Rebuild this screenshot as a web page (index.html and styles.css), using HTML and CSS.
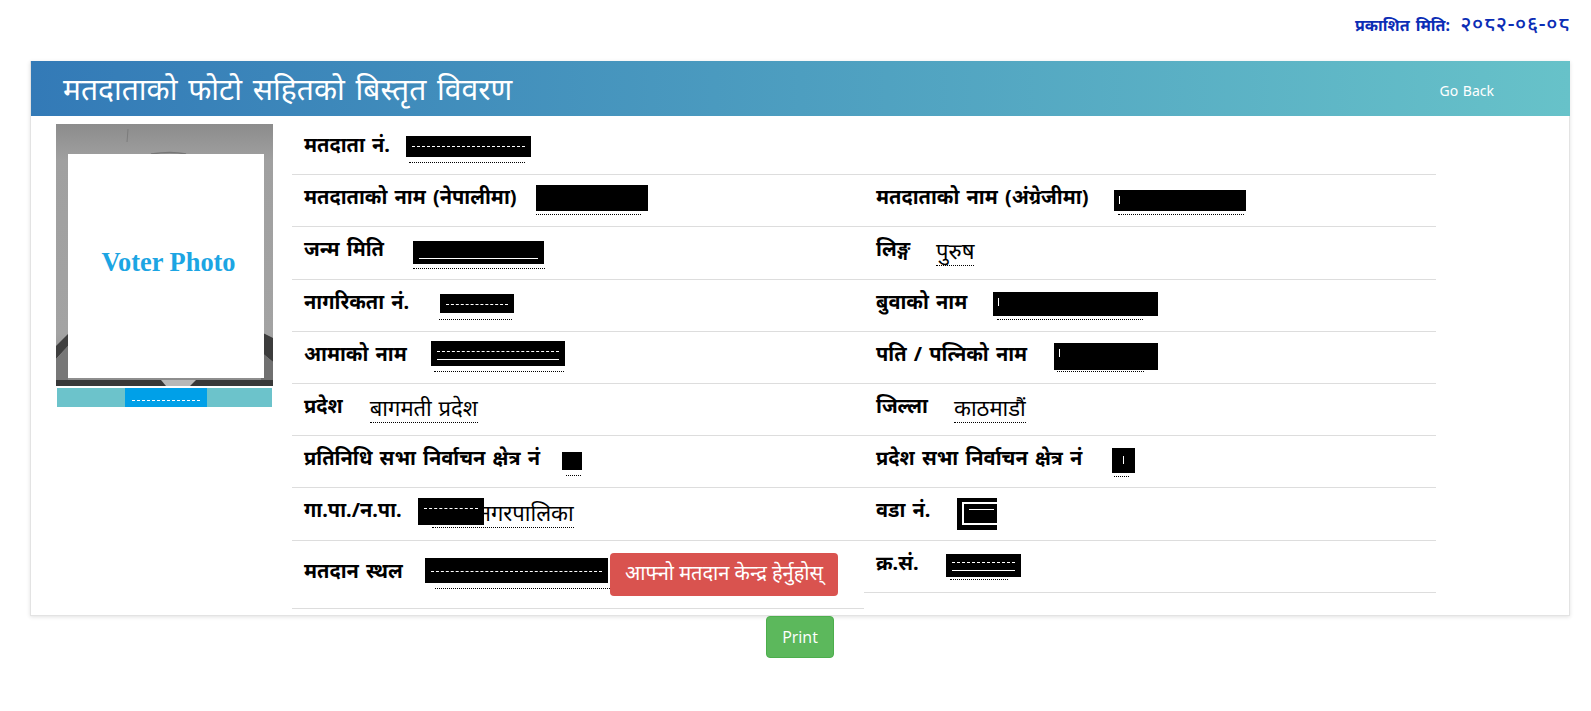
FILE: index.html
```html
<!DOCTYPE html>
<html lang="ne">
<head>
<meta charset="utf-8">
<title>मतदाता विवरण</title>
<link rel="stylesheet" href="styles.css">
</head>
<body>
<p class="published">प्रकाशित मिति: <span class="published-date">२०८२-०६-०८</span></p>
<main class="panel">
  <header class="panel-head">
    <h1 class="panel-title">मतदाताको फोटो सहितको बिस्तृत विवरण</h1>
    <a class="back" href="#">Go Back</a>
  </header>
  <div class="panel-body">
    <aside class="voter">
      <div class="photo">
        <svg class="photo-bg" viewBox="0 0 217 262" aria-hidden="true">
          <defs>
            <linearGradient id="wall" x1="0" y1="0" x2="0" y2="1">
              <stop offset="0" stop-color="#8c8c8c"/>
              <stop offset=".14" stop-color="#a0a0a0"/>
              <stop offset=".8" stop-color="#a3a3a3"/>
              <stop offset="1" stop-color="#8a8a8a"/>
            </linearGradient>
          </defs>
          <rect width="217" height="262" fill="url(#wall)"/>
          <path d="M71 18l1-13" stroke="#7c7c7c" stroke-width="1" fill="none"/>
          <path d="M95 30q20-3 35 0" stroke="#777" stroke-width="1.5" fill="none"/>
          <path d="M0 222L12 210V222L0 235Z" fill="#3f3f3f"/>
          <path d="M0 235L12 222V262H0Z" fill="#777"/>
          <path d="M205 208L217 214V238L205 228Z" fill="#3c3c3c"/>
          <path d="M205 228L217 238V262H205Z" fill="#707070"/>
          <rect y="256" width="217" height="6" fill="#383838"/>
          <path d="M105 256H140L134 262H110Z" fill="#b8b8b8"/>
        </svg>
        <div class="photo-card">Voter Photo</div>
      </div>
      <div class="caption"><span class="caption-tag"><i class="ticks"></i></span></div>
    </aside>
    <section class="details">
      <div class="row"><b class="lab">मतदाता नं.</b><span class="val masked w-voter"><i class="mask m-voter"><i class="ticks"></i></i></span></div>
      <div class="cols">
        <div class="col">
          <div class="row"><b class="lab">मतदाताको नाम (नेपालीमा)</b><span class="val masked w-np"><i class="mask m-np"></i></span></div>
          <div class="row"><b class="lab">जन्म मिति</b><span class="val masked w-dob"><i class="mask m-dob"><i class="ticks low"></i></i></span></div>
          <div class="row"><b class="lab">नागरिकता नं.</b><span class="val masked w-cit"><i class="mask m-cit"><i class="ticks"></i></i></span></div>
          <div class="row"><b class="lab">आमाको नाम</b><span class="val masked w-mom"><i class="mask m-mom"><i class="ticks two"></i></i></span></div>
          <div class="row"><b class="lab">प्रदेश</b><span class="val w-pr">बागमती प्रदेश</span></div>
          <div class="row"><b class="lab">प्रतिनिधि सभा निर्वाचन क्षेत्र नं</b><span class="val masked w-hor"><i class="mask m-hor"></i></span></div>
          <div class="row"><b class="lab">गा.पा./न.पा.</b><span class="val masked w-mun"><i class="mask m-mun"><i class="ticks"></i></i>नगरपालिका</span></div>
          <div class="row row-tall"><b class="lab">मतदान स्थल</b><span class="val masked w-place"><i class="mask m-place"><i class="ticks"></i></i></span><a class="btn" href="#">आफ्नो मतदान केन्द्र हेर्नुहोस्</a></div>
        </div>
        <div class="col">
          <div class="row"><b class="lab">मतदाताको नाम (अंग्रेजीमा)</b><span class="val masked w-en"><i class="mask m-en"><i class="nick"></i></i></span></div>
          <div class="row"><b class="lab">लिङ्ग</b><span class="val w-li">पुरुष</span></div>
          <div class="row"><b class="lab">बुवाको नाम</b><span class="val masked w-dad"><i class="mask m-dad"><i class="nick"></i></i></span></div>
          <div class="row"><b class="lab">पति / पत्निको नाम</b><span class="val masked w-sp"><i class="mask m-sp"><i class="nick"></i></i></span></div>
          <div class="row"><b class="lab">जिल्ला</b><span class="val w-ji">काठमाडौं</span></div>
          <div class="row"><b class="lab">प्रदेश सभा निर्वाचन क्षेत्र नं</b><span class="val masked w-pro"><i class="mask m-pro"><i class="nick"></i></i></span></div>
          <div class="row"><b class="lab">वडा नं.</b><span class="val w-ward"><i class="mask m-ward"><i class="frame"><i class="ticks"></i></i></i></span></div>
          <div class="row"><b class="lab">क्र.सं.</b><span class="val masked w-sn"><i class="mask m-sn"><i class="ticks two"></i></i></span></div>
        </div>
      </div>
    </section>
  </div>
</main>
<div class="print-wrap"><button class="btn-print" type="button">Print</button></div>
</body>
</html>
```
FILE: styles.css
```css
* { box-sizing: border-box; }
html, body { margin: 0; background: #fff; }
body {
  font-family: "Noto Sans", "Liberation Sans", sans-serif;
  color: #000;
  height: 711px;
  overflow: hidden;
}
.published {
  margin: 0;
  height: 61px;
  padding: 11px 21px 0 0;
  text-align: right;
  font-size: 16px;
  line-height: 24px;
  font-weight: 700;
  color: #0b2db5;
  word-spacing: 2px;
}
.published-date { margin-left: 4px; font-size: 21px; font-weight: 500; letter-spacing: .7px; }
.panel {
  margin: 0 21px 0 30px;
  height: 555px;
  border: 1px solid #e3e3e3;
  border-top: 0;
  box-shadow: 0 1px 4px rgba(0,0,0,.12);
}
.panel-head {
  height: 55px;
  margin: 0 -1px 0 0;
  display: flex;
  align-items: center;
  justify-content: space-between;
  padding: 0 76px 0 32px;
  background: linear-gradient(to right, #337ab7, #67c2c9);
  color: #fff;
}
.panel-title { margin: 0; font-size: 30px; line-height: 40px; font-weight: 400; word-spacing: 3px; }
.back { color: #fff; text-decoration: none; font-size: 14px; word-spacing: 1px; padding-top: 3px; }
.panel-body { display: flex; }
.voter { width: 261px; flex: none; padding: 8px 0 0 25px; }
.photo {
  position: relative;
  width: 217px;
  height: 262px;
  padding: 30px 9px 8px 12px;
}
.photo-bg { position: absolute; inset: 0; width: 100%; height: 100%; display: block; }
.photo-card {
  position: relative;
  height: 100%;
  background: #fff;
  display: flex;
  align-items: center;
  justify-content: center;
  font-family: "Liberation Serif", serif;
  font-weight: 700;
  font-size: 26.4px;
  color: #1ca5e3;
  padding: 0 0 8px 5px;
}
.caption {
  width: 215px;
  height: 19px;
  margin: 2px 0 0 1px;
  padding-left: 2px;
  background: #6cc3cb;
  display: flex;
  justify-content: center;
}
.caption-tag {
  width: 82px;
  padding: 12px 7px 0;
  background: #00a0e8;
}
.ticks { display: block; border-top: 1px dashed #fff; }
.details { width: 1144px; flex: none; padding-top: 7px; }
.cols { display: flex; }
.col { width: 572px; }
.row {
  height: 52.2px;
  padding: 0 12px 7px;
  border-bottom: 1px solid #ddd;
  display: flex;
  align-items: center;
  font-size: 20px;
  line-height: 26px;
  word-spacing: 2px;
}
.row-tall { height: 68px; position: relative; }
.lab { font-weight: 700; white-space: nowrap; }
.val {
  position: relative;
  display: inline-block;
  min-height: 30px;
  margin: 2px 0 0 28px;
  font-size: 22px;
  line-height: 30px;
  word-spacing: 1px;
  white-space: nowrap;
  border-bottom: 1px dotted #000;
}
.masked { margin-top: 6px; }
.mask { position: absolute; display: block; background: #000; }
.mask .ticks { margin: 10px 6px 0; }
.mask .ticks.low { margin-top: 17px; border-top-style: solid; }
.mask .ticks.two { height: 9px; border-bottom: 1px solid #fff; }
.nick { display: block; width: 1px; height: 8px; background: #fff; margin: 6px 0 0 5px; }
.frame { display: block; margin: 4px 0 0 5px; height: 23px; border: 2px solid #fff; border-right: 0; padding-top: 5px; }
.frame .ticks { margin: 0 3px 0 5px; border-top-style: solid; }

.w-voter { width: 116px; margin-left: 19px; }
.m-voter { left: -3px; top: 3px; width: 125px; height: 21px; }
.w-np { width: 105px; margin-left: 19px; }
.m-np { left: 0; top: 0; width: 112px; height: 26px; }
.w-dob { width: 132px; margin: 10px 0 0 29px; }
.m-dob { left: 0; top: 2px; width: 131px; height: 23px; }
.w-cit { width: 73px; margin-left: 30px; }
.m-cit { left: 1px; top: 4px; width: 74px; height: 19px; }
.w-mom { width: 130px; margin-left: 27px; }
.m-mom { left: -3px; top: -1px; width: 134px; height: 25px; }
.w-pr { margin-left: 27px; }
.w-hor { width: 15px; margin-left: 26px; }
.m-hor { left: -4px; top: 6px; width: 20px; height: 18px; }
.w-mun { width: 142px; margin: 5px 0 0 30px; text-align: right; }
.m-mun { left: -14px; top: 1px; width: 66px; height: 27px; }
.w-place { width: 175px; margin-left: 32px; }
.m-place { left: -10px; top: -1px; width: 183px; height: 25px; }
.m-place .ticks { margin-top: 13px; }
.w-en { width: 126px; margin-left: 30px; }
.m-en { left: -4px; top: 5px; width: 132px; height: 21px; }
.w-li { margin-left: 26px; }
.w-dad { width: 146px; margin-left: 30px; }
.m-dad { left: -4px; top: 2px; width: 165px; height: 24px; }
.w-sp { width: 87px; margin-left: 30px; }
.m-sp { left: -3px; top: 1px; width: 104px; height: 27px; }
.w-ji { margin-left: 26px; }
.w-pro { width: 15px; margin: 8px 0 0 32px; }
.m-pro { left: -2px; top: 1px; width: 23px; height: 25px; }
.m-pro .nick { margin: 8px 0 0 11px; }
.w-ward { width: 40px; margin-left: 27px; border-bottom: 0; }
.m-ward { left: 0; top: 2px; width: 40px; height: 32px; }
.w-sn { width: 58px; margin: 4px 0 0 31px; }
.m-sn { left: -4px; top: 4px; width: 75px; height: 23px; }
.m-sn .ticks { margin-top: 8px; }

.btn {
  position: absolute;
  left: 318px;
  top: 12px;
  width: 228px;
  height: 43px;
  border-radius: 4px;
  background: #d9534f;
  color: #fff;
  text-decoration: none;
  text-align: center;
  font-size: 20px;
  line-height: 40px;
  word-spacing: 0;
}
.print-wrap { display: flex; justify-content: center; margin-left: 9px; }
.btn-print {
  width: 68px;
  height: 42px;
  border: 1px solid #4cae4c;
  border-radius: 4px;
  background: #5cb85c;
  color: #fff;
  font-family: "Open Sans", sans-serif;
  font-size: 16px;
}
```
